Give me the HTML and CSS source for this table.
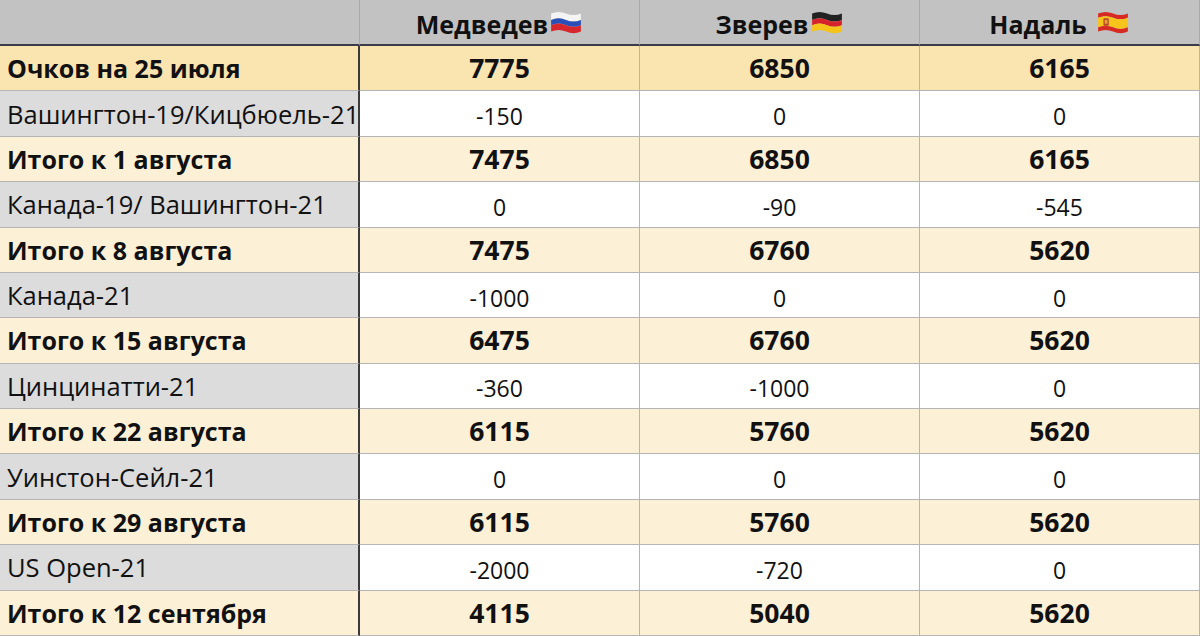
FILE: index.html
```html
<!DOCTYPE html>
<html lang="ru">
<head>
<meta charset="utf-8">
<link rel="stylesheet" href="styles.css">
</head>
<body>
<div class="table">
  <div class="cell head label"></div>
  <div class="cell head">Медведев<svg class="flag" viewBox="0 0 32 24"><path fill="#f4f4f4" d="M2 4 Q9 1 16 4 T30 4 L30 10 Q23 13 16 10 T2 10 Z"/><path fill="#2a50b8" d="M2 10 Q9 7 16 10 T30 10 L30 15 Q23 18 16 15 T2 15 Z"/><path fill="#d8262e" d="M2 15 Q9 12 16 15 T30 15 L30 21 Q23 24 16 21 T2 21 Z"/></svg></div>
  <div class="cell head">Зверев<svg class="flag" viewBox="0 0 32 24"><path fill="#222" d="M2 4 Q9 1 16 4 T30 4 L30 10 Q23 13 16 10 T2 10 Z"/><path fill="#d6222a" d="M2 10 Q9 7 16 10 T30 10 L30 15 Q23 18 16 15 T2 15 Z"/><path fill="#f6c318" d="M2 15 Q9 12 16 15 T30 15 L30 21 Q23 24 16 21 T2 21 Z"/></svg></div>
  <div class="cell head">Надаль<svg class="flag spaced" viewBox="0 0 32 24"><path fill="#d62a22" d="M2 4 Q9 1 16 4 T30 4 L30 8 Q23 11 16 8 T2 8 Z"/><path fill="#f7c41c" d="M2 8 Q9 5 16 8 T30 8 L30 17 Q23 20 16 17 T2 17 Z"/><path fill="#d62a22" d="M2 17 Q9 14 16 17 T30 17 L30 21 Q23 24 16 21 T2 21 Z"/><rect x="7" y="8.5" width="5" height="7" rx="1" fill="#b8452a"/><rect x="8.2" y="10" width="2.6" height="3.6" fill="#e9a23a"/></svg></div>

  <div class="cell label start bold">Очков на 25 июля</div>
  <div class="cell start bold">7775</div><div class="cell start bold">6850</div><div class="cell start bold">6165</div>

  <div class="cell label event">Вашингтон-19/Кицбюель-21</div>
  <div class="cell event val">-150</div><div class="cell event val">0</div><div class="cell event val">0</div>

  <div class="cell label total bold">Итого к 1 августа</div>
  <div class="cell total bold">7475</div><div class="cell total bold">6850</div><div class="cell total bold">6165</div>

  <div class="cell label event">Канада-19/ Вашингтон-21</div>
  <div class="cell event val">0</div><div class="cell event val">-90</div><div class="cell event val">-545</div>

  <div class="cell label total bold">Итого к 8 августа</div>
  <div class="cell total bold">7475</div><div class="cell total bold">6760</div><div class="cell total bold">5620</div>

  <div class="cell label event">Канада-21</div>
  <div class="cell event val">-1000</div><div class="cell event val">0</div><div class="cell event val">0</div>

  <div class="cell label total bold">Итого к 15 августа</div>
  <div class="cell total bold">6475</div><div class="cell total bold">6760</div><div class="cell total bold">5620</div>

  <div class="cell label event">Цинцинатти-21</div>
  <div class="cell event val">-360</div><div class="cell event val">-1000</div><div class="cell event val">0</div>

  <div class="cell label total bold">Итого к 22 августа</div>
  <div class="cell total bold">6115</div><div class="cell total bold">5760</div><div class="cell total bold">5620</div>

  <div class="cell label event">Уинстон-Сейл-21</div>
  <div class="cell event val">0</div><div class="cell event val">0</div><div class="cell event val">0</div>

  <div class="cell label total bold">Итого к 29 августа</div>
  <div class="cell total bold">6115</div><div class="cell total bold">5760</div><div class="cell total bold">5620</div>

  <div class="cell label event">US Open-21</div>
  <div class="cell event val">-2000</div><div class="cell event val">-720</div><div class="cell event val">0</div>

  <div class="cell label total bold">Итого к 12 сентября</div>
  <div class="cell total bold">4115</div><div class="cell total bold">5040</div><div class="cell total bold">5620</div>
</div>
</body>
</html>
```
FILE: styles.css
```css
html, body {
  margin: 0;
  padding: 0;
  background: #ffffff;
}
.table {
  display: grid;
  grid-template-columns: 360px 280px 280px 280px;
  grid-template-rows: 46px repeat(13, 1fr);
  height: 636px;
  width: 1200px;
  font-family: "Open Sans", "Noto Sans", sans-serif;
  color: #111;
}
.cell {
  display: flex;
  align-items: center;
  justify-content: center;
  box-sizing: border-box;
  border-right: 1px solid #b5b5b5;
  border-bottom: 1px solid #b5b5b5;
  font-size: 23px;
  overflow: hidden;
  white-space: nowrap;
}
.cell.label {
  justify-content: flex-start;
  padding-left: 7px;
  border-right: 2px solid #3a3a3a;
  font-size: 25.5px;
}
.head {
  background: #c2c2c2;
  border-bottom: 2px solid #3b3b4a;
  border-right-color: #a9a9a9;
  font-weight: 700;
  font-size: 25px;
  padding-top: 4px;
}
.head.label {
  border-right: 1px solid #a9a9a9;
}
.flag {
  width: 34px;
  height: 26px;
  margin-left: 1px;
  margin-bottom: 4px;
}
.flag.spaced {
  margin-left: 9px;
}
.bold {
  font-weight: 700;
  font-size: 26.5px;
}
.cell.label.bold {
  font-size: 25px;
}
.start {
  background: #fae4b0;
}
.total {
  background: #fcf0d6;
}
.event {
  background: #ffffff;
}
.event.label {
  background: #dcdcdc;
}
.val {
  padding-top: 5px;
}
```
